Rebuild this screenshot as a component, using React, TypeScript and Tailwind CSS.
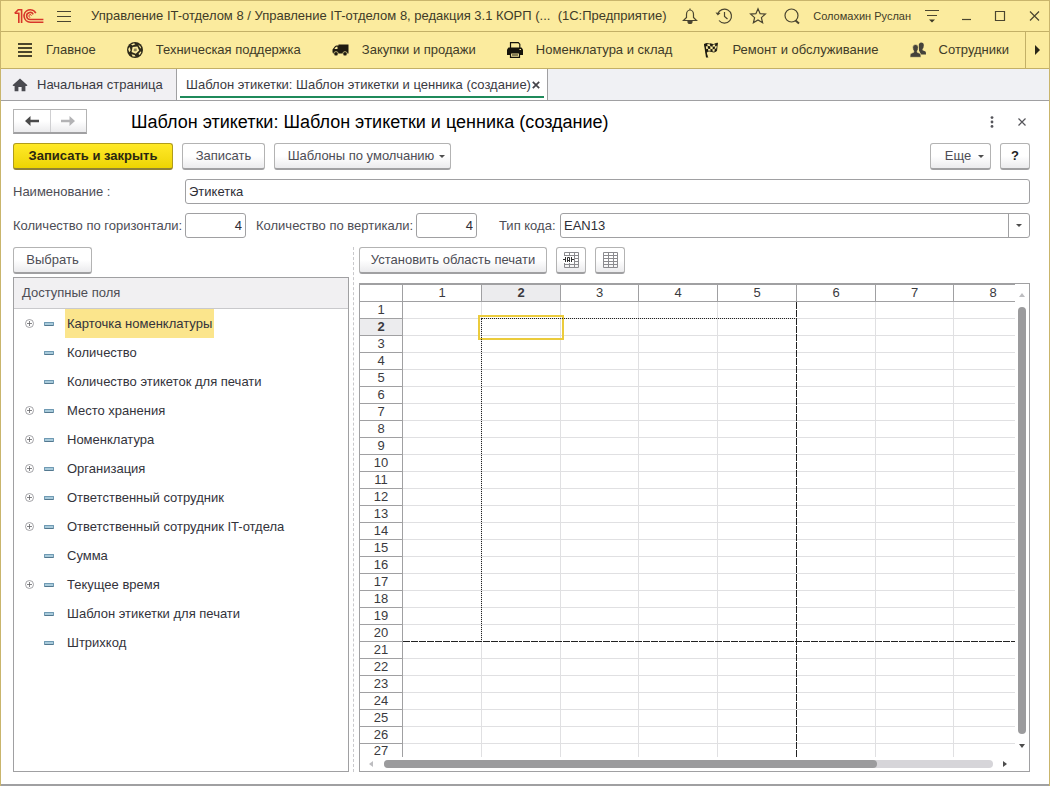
import type { ReactNode } from 'react';
import { clsx } from 'clsx';

const sections = [
  { label: 'Главное', icon: <LinesIcon /> },
  { label: 'Техническая поддержка', icon: <BallIcon /> },
  { label: 'Закупки и продажи', icon: <TruckIcon /> },
  { label: 'Номенклатура и склад', icon: <PrinterIcon /> },
  { label: 'Ремонт и обслуживание', icon: <FlagIcon /> },
  { label: 'Сотрудники', icon: <PeopleIcon /> },
];

const fields = [
  { name: 'Карточка номенклатуры', group: true },
  { name: 'Количество', group: false },
  { name: 'Количество этикеток для печати', group: false },
  { name: 'Место хранения', group: true },
  { name: 'Номенклатура', group: true },
  { name: 'Организация', group: true },
  { name: 'Ответственный сотрудник', group: true },
  { name: 'Ответственный сотрудник IT-отдела', group: true },
  { name: 'Сумма', group: false },
  { name: 'Текущее время', group: true },
  { name: 'Шаблон этикетки для печати', group: false },
  { name: 'Штрихкод', group: false },
];

const columns = [1, 2, 3, 4, 5, 6, 7, 8];
const rows = Array.from({ length: 27 }, (_, i) => i + 1);

function Logo() {
  return (
    <svg viewBox="0 0 30 16" className="w-[30px] h-4" fill="none" stroke="#d8362a" strokeWidth="1.6" aria-label="1C">
      <path d="M0.8 5.2 4.2 1.8H7.6V15" />
      <path d="M0.8 5.2H4.8V15" />
      <path d="M21.8 5.2A6.2 6.2 0 1 0 16.3 14.2H29.4" />
      <path d="M19.2 6.3A3.5 3.5 0 1 0 16.3 11.5H29.4" />
      <path d="M17.6 7.6A1.4 1.4 0 1 0 16.3 9.4" strokeWidth="1" />
    </svg>
  );
}

function LinesIcon() {
  return (
    <svg viewBox="0 0 16 16" className="w-4 h-4" stroke="#4b462c" strokeWidth="2">
      <path d="M1 2h14M1 6h14M1 10h14M1 14h14" />
    </svg>
  );
}

function BallIcon() {
  return (
    <svg viewBox="0 0 16 16" className="w-4 h-4">
      <circle cx="8" cy="8" r="8" fill="#2e2a1a" />
      <path d="M5.6 5 10.4 4.4 12.2 8.6 8.8 11.8 4.6 10Z" fill="#fbeb9e" />
      <path d="M7.4 6.4 9.6 6.6 9.8 8.8 7.8 9.6 6.4 8.2Z" fill="#8a8159" />
      <path d="M4 2.4 7 1.2 8.4 2.2 5.6 3.6ZM1.2 7 2.8 5 3.6 8.6 2.2 10.2ZM4.6 12.2 7.6 13 8.6 14.6 5.6 14.4ZM11.4 12 13.4 9.4 14.4 10 12.8 13ZM11.4 2.4 14 5 13.6 6.8 12 4.2Z" fill="#fbeb9e" />
    </svg>
  );
}

function TruckIcon() {
  return (
    <svg viewBox="0 0 17 14" className="w-[17px] h-[14px]" fill="#1f1b10">
      <path d="M6.500 1.500H16.500V10.500H1L.5 9V6.500L3 3.200Q3.600 2.500 4.500 2.500H6.500Z" />
      <path d="M2.300 6 4 3.800H5.500V6Z" fill="#fbeb9e" />
      <circle cx="4" cy="10.800" r="2.200" stroke="#fbeb9e" strokeWidth="0.7" />
      <circle cx="13" cy="10.800" r="2.200" stroke="#fbeb9e" strokeWidth="0.7" />
    </svg>
  );
}

function PrinterIcon() {
  return (
    <svg viewBox="0 0 16 16" className="w-4 h-4">
      <path d="M3.5 6V.7h7.8l1.5 1.5V6" fill="#fbeb9e" stroke="#16140c" strokeWidth="1.2" />
      <path d="M1.5 5.5h13L16 7.5V13H0V7.5Z" fill="#16140c" />
      <path d="M12.5 7.5h1.5" stroke="#fbeb9e" />
      <path d="M3.5 11h9v4.3h-9Z" fill="#fbeb9e" stroke="#16140c" strokeWidth="1.2" />
      <path d="M5 13h6" stroke="#16140c" />
    </svg>
  );
}

function FlagIcon() {
  return (
    <svg viewBox="0 0 16 16" className="w-4 h-4">
      <path d="M1 2.500Q4 .5 7 2T14.500 1L13.500 9Q11 11 8.500 9.500T3 10.500L4.800 15.500" fill="#fbeb9e" stroke="#1d1a10" strokeWidth="0.8" />
      <path d="M1 2 3 15.500H4.600L2.400 2Z" fill="#1d1a10" />
      <g fill="#1d1a10">
        <path d="M1.200 2 4.200 1.200 4.600 4 1.700 4.800ZM7 1.600 9.800 2 9.700 4.700 7.200 4.300ZM12.200 1.800 14.500 1 14.200 3.600 12 4.400Z" />
        <path d="M4.600 4 7.200 4.300 7.400 7 5 6.800ZM9.700 4.700 12 4.400 11.700 7 9.600 7.300Z" />
        <path d="M2.100 7.500 5 6.800 5.300 9.600 2.600 10.300ZM7.400 7 9.600 7.300 9.500 9.900 7.600 9.400ZM11.700 7 13.900 6.200 13.500 9 11.500 9.900Z" />
      </g>
    </svg>
  );
}

function PeopleIcon() {
  return (
    <svg viewBox="0 0 16 16" className="w-4 h-4" fill="#45423a">
      <path d="M11 .5Q14 .5 13.800 3.500 13.700 6 12.500 7V8.200L15.500 9.600Q16 10 16 12.500H11L9 8.500 8.800 2.500Q9.500.5 11 .5Z" />
      <path
        d="M5.500 2.500Q8.500 2.500 8.300 5.500 8.200 8 7.200 9V10.200L10.300 11.600Q11 12 11 15.300H0Q0 12 .7 11.600L3.800 10.200V9Q2.800 8 2.700 5.500 2.500 2.500 5.500 2.500Z"
        stroke="#fbeb9e"
        strokeWidth="0.6"
      />
    </svg>
  );
}

function HomeIcon() {
  return (
    <svg viewBox="0 0 16 14" className="w-4 h-[14px]" fill="#4a4a50">
      <path d="M8 .5.5 7.2 1.4 8H2.6V13.2H6.4V9H9.6V13.2H13.4V8H14.6L15.5 7.2Z" />
    </svg>
  );
}

function SheetIcon({ named }: { named?: boolean }) {
  return (
    <svg viewBox="0 0 18 18" className="w-[18px] h-[18px]" fill="none" stroke="#8b8b8f">
      <path d="M2.5 1.5h14v15h-14ZM7.5 1.5v15M12.5 1.5v15M2.5 4.5h14M2.5 7.5h14M2.5 10.5h14M2.5 13.5h14" />
      {named && (
        <>
          <path d="M1 5h11v7H1Z" fill="#fff" stroke="none" />
          <path d="M1 8.5h2.5M3.5 6v5M5.5 11V6.5h2V11M5.5 9.5h2M9.5 6v5M9.5 8.5H12" stroke="#333" />
        </>
      )}
    </svg>
  );
}

function Caret() {
  return <span className="w-0 h-0 border-x-[3px] border-x-transparent border-t-[3px] border-t-[#4d4d4d]" />;
}

function TitleButton({ label, children }: { label: string; children: ReactNode }) {
  return (
    <button aria-label={label} className="w-[18px] h-[18px] flex items-center justify-center">
      <svg viewBox="0 0 18 18" className="w-[18px] h-[18px]" fill="none" stroke="#4a4530" strokeWidth="1.2">
        {children}
      </svg>
    </button>
  );
}

function Button({ children, className, label }: { children: ReactNode; className?: string; label?: string }) {
  return (
    <button
      aria-label={label}
      className={clsx(
        'h-[27px] flex items-center justify-center shrink-0 rounded-[3px] border border-[#b3b3b3] border-b-2 border-b-[#a0a0a2] bg-linear-to-b from-white from-50% to-[#ebebed] whitespace-nowrap',
        className,
      )}
    >
      {children}
    </button>
  );
}

function TitleBar() {
  return (
    <header className="h-[31px] flex items-center border-b border-[#c3b067] pl-[13px] pr-[6px] text-[#3f3b28]">
      <Logo />
      <button aria-label="Меню" className="ml-3 w-4 h-4">
        <svg viewBox="0 0 16 16" className="w-4 h-4" stroke="#4a4530" strokeWidth="1">
          <path d="M1 3.5h14M1 8.5h14M1 13.5h14" />
        </svg>
      </button>
      <h1 className="flex-1 ml-[19px] whitespace-pre">
        Управление IT-отделом 8 / Управление IT-отделом 8, редакция 3.1 КОРП (...{'  '}(1С:Предприятие)
      </h1>
      <div className="flex items-center gap-4">
        <TitleButton label="Уведомления">
          <path d="M2.500 13.500H15.500L12.500 10.500V7.500C12.500 5 11 3 9 3S5.500 5 5.500 7.500V10.500ZM9 3V1.500" />
          <path d="M7 14.500a2 2 0 0 0 4 0Z" fill="#4a4530" />
        </TitleButton>
        <TitleButton label="История">
          <path d="M2.800 7A7 7 0 1 1 4 13.500M9.500 5V9.500L12.500 12" />
          <path d="M.5 5.500 2.800 8.500 5.500 6Z" fill="#4a4530" stroke="none" />
        </TitleButton>
        <TitleButton label="Избранное">
          <path d="m9 1.800 2.100 4.900 5.300.4-4 3.500 1.200 5.200L9 13l-4.600 2.800 1.200-5.200-4-3.500 5.300-.4Z" />
        </TitleButton>
        <TitleButton label="Поиск">
          <circle cx="8.500" cy="8.500" r="6.500" />
          <path d="m12.500 13.500 3.500 3" strokeWidth="2" />
        </TitleButton>
      </div>
      <span className="ml-3 text-[11px]">Соломахин Руслан</span>
      <div className="ml-3 flex items-center gap-4">
        <TitleButton label="Настройки">
          <path d="M2 3.500h14M4 8.500h10" />
          <path d="M6 12.500h6L9 15.500Z" fill="#3c3825" stroke="none" />
        </TitleButton>
        <TitleButton label="Свернуть">
          <path d="M5 12.500h9" />
        </TitleButton>
        <TitleButton label="Развернуть">
          <path d="M4.500 4.500h9v9h-9Z" />
        </TitleButton>
        <TitleButton label="Закрыть">
          <path d="m5 4.500 9 9M14 4.500l-9 9" />
        </TitleButton>
      </div>
    </header>
  );
}

function SectionBar() {
  return (
    <nav className="h-[37px] flex border-b border-[#c3b067] text-[#3f3b28]">
      <div className="flex-1 flex items-center justify-between pl-4 pr-4">
        {sections.map((s) => (
          <button key={s.label} className="flex items-center gap-[13px] whitespace-nowrap">
            {s.icon}
            {s.label}
          </button>
        ))}
      </div>
      <button aria-label="Ещё разделы" className="w-6 flex items-center justify-center border-l border-[#c3b067]">
        <span className="w-0 h-0 border-y-[5px] border-y-transparent border-l-[5px] border-l-[#2b2718]" />
      </button>
    </nav>
  );
}

function Tabs() {
  return (
    <div className="h-8 flex bg-[#f0f1f4] border-b border-[#a0a0a2] text-[#3a3a42]">
      <button className="w-44 flex items-center gap-[9px] pl-[11px] bg-[#f1f0f3] border-r border-[#a0a0a2] whitespace-nowrap">
        <HomeIcon />
        Начальная страница
      </button>
      <div className="w-[371px] flex bg-white border-r border-[#a0a0a2] px-[3px] pb-[2px]">
        <div className="flex-1 flex items-center justify-between pt-1 pl-[6px] pr-1 border-b-2 border-[#1f8a5b] whitespace-nowrap">
          <span>Шаблон этикетки: Шаблон этикетки и ценника (создание)</span>
          <button aria-label="Закрыть вкладку">
            <svg viewBox="0 0 8 8" className="w-2 h-2" stroke="#44444a" strokeWidth="1.7">
              <path d="m.8.8 6.400 6.400M7.200.8.8 7.200" />
            </svg>
          </button>
        </div>
      </div>
    </div>
  );
}

function FieldTree() {
  return (
    <div className="flex-1 border border-[#a0a0a2]">
      <div className="h-[31px] flex items-center pl-2 bg-[#f1f0f2] border-b border-[#c9c9cc] text-[#4d4d55]">Доступные поля</div>
      <ul role="tree" aria-label="Доступные поля" className="text-[#33333b]">
        {fields.map((f, i) => (
          <li key={f.name} role="treeitem" aria-selected={i === 0} className="h-[29px] flex items-center pl-[11px]">
            {f.group ? (
              <button aria-label="Развернуть" className="w-[9px] h-[9px]">
                <svg viewBox="0 0 9 9" className="w-[9px] h-[9px]" fill="none" stroke="#8d8d92" strokeWidth="0.8">
                  <circle cx="4.500" cy="4.500" r="4" />
                  <path d="M2 4.500h5M4.500 2v5" stroke="#66666a" />
                </svg>
              </button>
            ) : (
              <span className="w-[9px]" />
            )}
            <span className="ml-[10px] w-[10px] h-1 rounded-[1px] border border-[#6f9ab3] border-b-[#54788f] bg-[#a9cbdb]" />
            <span className={clsx('ml-[11px] h-[29px] flex items-center px-[2px] whitespace-nowrap', i === 0 && 'bg-[#fbe58c]')}>
              {f.name}
            </span>
          </li>
        ))}
      </ul>
    </div>
  );
}

function Sheet() {
  return (
    <div className="flex-1 min-h-0 flex flex-col border border-[#a0a0a2]">
      <div className="flex-1 min-h-0 flex">
        <div className="relative flex-1 min-w-0 overflow-hidden border-t border-[#a0a0a2]">
          <table className="w-[673px] table-fixed border-separate border-spacing-0 text-center text-[#3a3a3e]">
            <colgroup>
              <col className="w-[43px]" />
              {columns.map((c) => (
                <col key={c} className={c === 3 || c === 7 ? 'w-[78px]' : 'w-[79px]'} />
              ))}
            </colgroup>
            <thead>
              <tr>
                <th className="p-0 border-r border-b border-[#a0a0a2]" />
                {columns.map((c) => (
                  <th
                    key={c}
                    scope="col"
                    className={clsx('h-[17px] p-0 leading-4 border-r border-b border-[#a0a0a2]', c === 2 ? 'font-bold bg-[#ececee]' : 'font-normal')}
                  >
                    {c}
                  </th>
                ))}
              </tr>
            </thead>
            <tbody>
              {rows.map((r) => (
                <tr key={r}>
                  <th
                    scope="row"
                    className={clsx(
                      'p-0 border-r border-[#a0a0a2]',
                      r === 2 ? 'font-bold bg-[#ececee]' : 'font-normal',
                      r === rows.length ? 'h-[14px] leading-[14px]' : 'h-[17px] leading-4 border-b',
                    )}
                  >
                    {r}
                  </th>
                  {columns.map((c) => (
                    <td key={c} className={clsx('p-0 border-r border-[#e0e0e2]', r !== rows.length && 'border-b')} />
                  ))}
                </tr>
              ))}
            </tbody>
          </table>
          {/* active cell */}
          <div className="absolute left-[118px] top-[30px] w-[86px] h-[25px] border-2 border-[#ebcb3c]" />
          {/* print area */}
          <div className="absolute left-[121px] top-[33px] w-[316px] h-[324px] border-t border-l border-dotted border-[#222]" />
          {/* page edges */}
          <div className="absolute left-[43px] right-0 top-[356px] h-px bg-[repeating-linear-gradient(to_right,#222_0_7px,#fff_7px_8px)]" />
          <div className="absolute left-[436px] top-[17px] bottom-0 w-px bg-[repeating-linear-gradient(to_bottom,#222_0_7px,#fff_7px_8px)]" />
        </div>
        <div role="scrollbar" aria-label="Прокрутка по вертикали" aria-controls="sheet" aria-valuenow={0} className="w-[14px] flex flex-col items-center pt-[9px] pb-[9px]">
          <span className="w-0 h-0 border-x-[3px] border-x-transparent border-b-[4px] border-b-[#bdbdc0]" />
          <span className="mt-[10px] mb-[10px] flex-1 w-2 rounded-full bg-[#9b9b9d]" />
          <span className="w-0 h-0 border-x-[3px] border-x-transparent border-t-[4px] border-t-[#4d4d4d]" />
        </div>
      </div>
      <div role="scrollbar" aria-label="Прокрутка по горизонтали" aria-controls="sheet" aria-valuenow={0} className="h-[14px] flex items-center pl-[9px] pr-[22px]">
        <span className="w-0 h-0 border-y-[3px] border-y-transparent border-r-[4px] border-r-[#bdbdc0]" />
        <span className="ml-[11px] mr-[10px] flex-1 h-2 rounded-full bg-[#d6d5d9]">
          <span className="block w-[81%] h-2 rounded-full bg-[#9b9b9d]" />
        </span>
        <span className="w-0 h-0 border-y-[3px] border-y-transparent border-l-[4px] border-l-[#4d4d4d]" />
      </div>
    </div>
  );
}

const inputClass = 'h-[25px] rounded-[3px] border border-[#a0a0a2] bg-white text-[#2e2e36] outline-none';

export default function App() {
  return (
    <div className="h-screen flex flex-col bg-[#fbeb9e] border-x border-t border-[#c9b56c] font-['Liberation_Sans',Arial,sans-serif] text-[13px] leading-4">
      <TitleBar />
      <SectionBar />
      <Tabs />
      <main className="flex-1 min-h-0 flex flex-col bg-white border-b-2 border-[#a0a0a2] pl-3 pr-[19px] pt-2 pb-3 text-[#4d4d55]">
        <div className="h-[25px] flex items-center shrink-0">
          <div className="w-[74px] h-[25px] flex border border-[#b3b3b3] border-b-2 border-b-[#a0a0a2] bg-linear-to-b from-white from-50% to-[#ebebed]">
            <button aria-label="Назад" className="flex-1 flex items-center justify-center border-r border-[#cfcfd1]">
              <svg viewBox="0 0 14 10" className="w-[14px] h-[10px]" fill="#4a4a4a">
                <path d="M0 5 5.500 0V3.800H14V6.200H5.500V10Z" />
              </svg>
            </button>
            <button aria-label="Вперед" className="flex-1 flex items-center justify-center">
              <svg viewBox="0 0 14 10" className="w-[14px] h-[10px]" fill="#b3b3b5">
                <path d="M14 5 8.500 0V3.800H0V6.200H8.500V10Z" />
              </svg>
            </button>
          </div>
          <h2 className="flex-1 ml-11 text-lg leading-6 text-black whitespace-nowrap">Шаблон этикетки: Шаблон этикетки и ценника (создание)</h2>
          <button aria-label="Действия" className="mr-6">
            <svg viewBox="0 0 4 12" className="w-1 h-3" fill="#55555a">
              <circle cx="2" cy="1.600" r="1.400" />
              <circle cx="2" cy="6" r="1.400" />
              <circle cx="2" cy="10.400" r="1.400" />
            </svg>
          </button>
          <button aria-label="Закрыть" className="mr-1">
            <svg viewBox="0 0 8 8" className="w-2 h-2" stroke="#55555a" strokeWidth="1.2">
              <path d="m.5.5 7 7M7.500.5l-7 7" />
            </svg>
          </button>
        </div>

        <div className="mt-[9px] flex gap-[9px]">
          <button className="w-40 h-[27px] rounded-[3px] border border-[#b09c1c] border-b-2 border-b-[#8f8038] bg-linear-to-b from-[#ffe926] to-[#eed400] font-bold text-[#2b2710] whitespace-nowrap">
            Записать и закрыть
          </button>
          <Button className="w-[83px]">Записать</Button>
          <Button className="w-[177px] gap-[5px] pl-2">
            Шаблоны по умолчанию
            <Caret />
          </Button>
          <Button className="ml-auto w-[61px] gap-[7px] pl-2">
            Еще
            <Caret />
          </Button>
          <Button className="w-[30px] font-bold text-[#222]">?</Button>
        </div>

        <div className="mt-[9px] flex items-center">
          <label htmlFor="name" className="w-[172px] shrink-0">Наименование :</label>
          <input id="name" type="text" defaultValue="Этикетка" className={clsx(inputClass, 'flex-1 min-w-0 px-[3px]')} />
        </div>

        <div className="mt-[9px] flex items-center whitespace-nowrap">
          <label htmlFor="horizontal" className="w-[172px] shrink-0">Количество по горизонтали:</label>
          <input id="horizontal" type="text" defaultValue="4" className={clsx(inputClass, 'w-[61px] px-[3px] text-right')} />
          <label htmlFor="vertical" className="ml-[10px] w-[160px] shrink-0">Количество по вертикали:</label>
          <input id="vertical" type="text" defaultValue="4" className={clsx(inputClass, 'w-[61px] px-[3px] text-right')} />
          <label htmlFor="code" className="ml-[22px] w-[61px] shrink-0">Тип кода:</label>
          <div className="relative flex-1">
            <select id="code" className={clsx(inputClass, 'block w-full appearance-none pl-[3px]')}>
              <option>EAN13</option>
            </select>
            <span className="absolute right-px inset-y-px w-[21px] flex items-center justify-center border-l border-[#a0a0a2] pointer-events-none">
              <Caret />
            </span>
          </div>
        </div>

        <div className="mt-[9px] flex-1 min-h-0 flex">
          <section className="w-[336px] shrink-0 flex flex-col gap-[3px]">
            <Button className="w-[79px]">Выбрать</Button>
            <FieldTree />
          </section>
          <div className="ml-1 mr-[5px] border-l border-dashed border-[#c9c9cc]" />
          <section id="sheet" className="flex-1 min-w-0 flex flex-col gap-[9px]">
            <div className="flex gap-[9px]">
              <Button className="w-[188px]">Установить область печати</Button>
              <Button className="w-[30px]" label="Имя области"><SheetIcon named /></Button>
              <Button className="w-[30px]" label="Сетка"><SheetIcon /></Button>
            </div>
            <Sheet />
          </section>
        </div>
      </main>
    </div>
  );
}
